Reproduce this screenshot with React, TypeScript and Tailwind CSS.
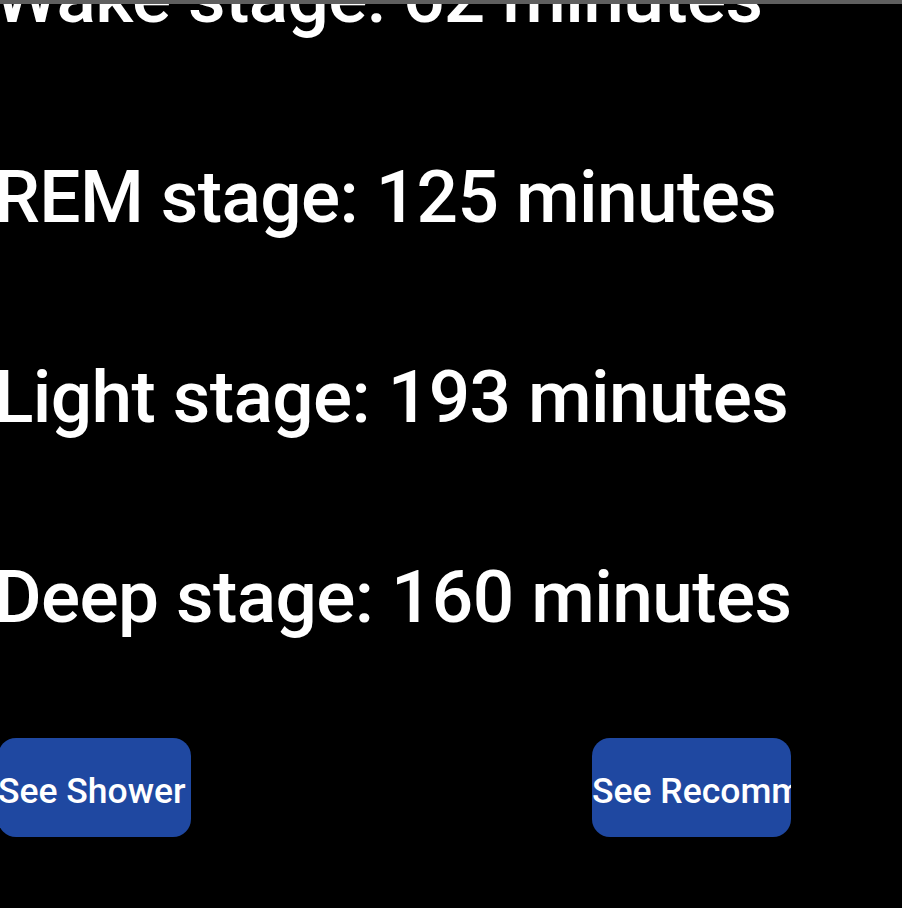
const stages = [
  { name: "Wake", minutes: 62 },
  { name: "REM", minutes: 125 },
  { name: "Light", minutes: 193 },
  { name: "Deep", minutes: 160 },
];

export default function App() {
  return (
    <div
      className="flex h-[908px] w-[902px] flex-col overflow-hidden bg-black text-white"
      style={{ fontFamily: "Roboto, 'Noto Sans', sans-serif" }}
    >
      <div className="h-[4px] w-full shrink-0 bg-[#5f5f5f]" />

      <div className="flex-1 overflow-hidden">
        <div className="-mt-[107px] -ml-[6px]">
          {stages.map((s) => (
            <div
              key={s.name}
              className="whitespace-nowrap text-[73px] font-medium leading-[200px] tracking-[-0.6px]"
            >
              {s.name} stage: {s.minutes} minutes
            </div>
          ))}
        </div>

        <div className="mt-[41px] flex w-[793px] -ml-[2px] justify-between">
          <button className="h-[99px] w-[193px] overflow-hidden whitespace-nowrap rounded-[18px] bg-[#1f48a1] pt-[8px] text-left text-[35.5px] font-medium text-white">
            See Shower Routine
          </button>
          <button className="h-[99px] w-[199px] overflow-hidden whitespace-nowrap rounded-[18px] bg-[#1f48a1] pt-[8px] text-left text-[35.5px] font-medium text-white">
            See Recommendations
          </button>
        </div>
      </div>
    </div>
  );
}
